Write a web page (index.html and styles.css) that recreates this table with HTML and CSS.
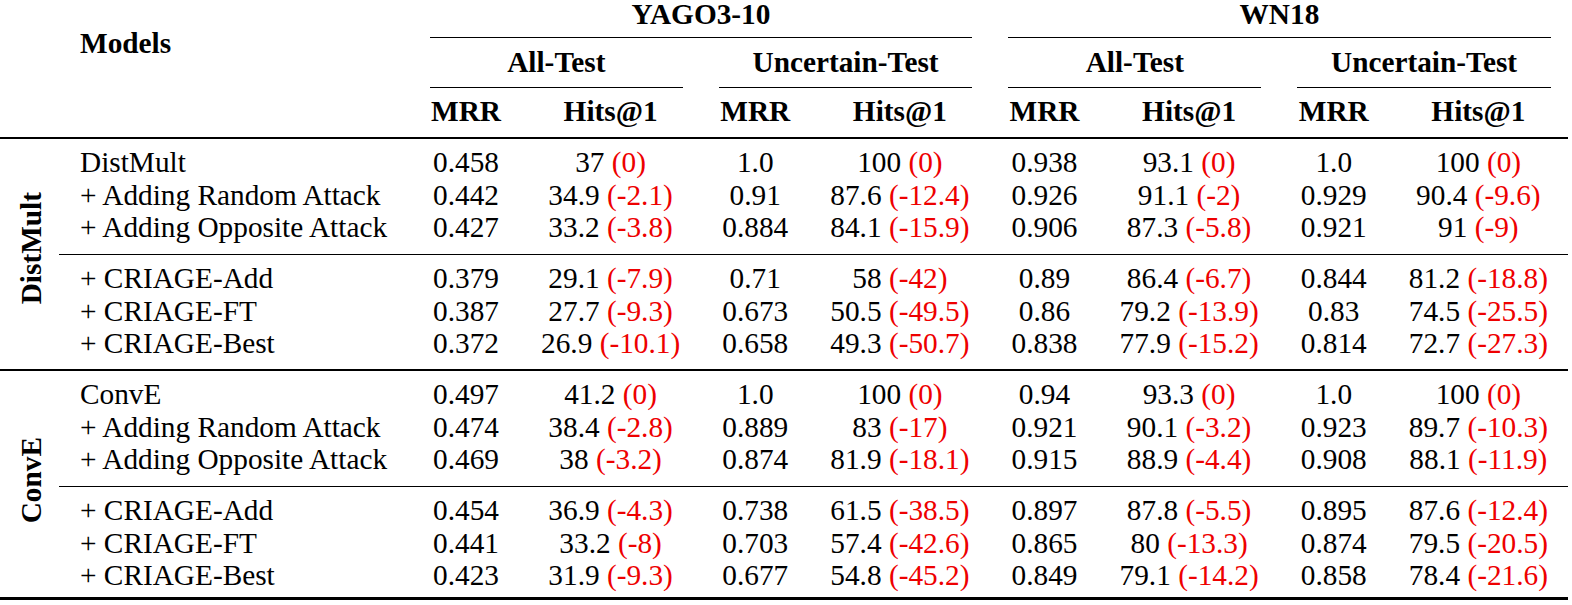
FILE: index.html
```html
<!DOCTYPE html>
<html lang="en">
<head>
<meta charset="utf-8">
<title>Results table</title>
<link rel="stylesheet" href="styles.css">
</head>
<body>
<div class="table">
  <div class="head">
    <div class="models">Models</div>
    <div class="ds cy">YAGO3-10</div>
    <div class="ds cw">WN18</div>
    <div class="crule r2 cy"></div>
    <div class="crule r2 cw"></div>
    <div class="sub c2">All-Test</div>
    <div class="sub c4">Uncertain-Test</div>
    <div class="sub c6">All-Test</div>
    <div class="sub c8">Uncertain-Test</div>
    <div class="crule r4 c2"></div>
    <div class="crule r4 c4"></div>
    <div class="crule r4 c6"></div>
    <div class="crule r4 c8"></div>
    <div class="met k2">MRR</div>
    <div class="met k3">Hits@1</div>
    <div class="met k4">MRR</div>
    <div class="met k5">Hits@1</div>
    <div class="met k6">MRR</div>
    <div class="met k7">Hits@1</div>
    <div class="met k8">MRR</div>
    <div class="met k9">Hits@1</div>
  </div>
  <div class="mid"></div>

  <section class="group">
    <div class="side"><span class="vlabel">DistMult</span></div>
    <div class="gbody">
      <div class="row"><span class="name">DistMult</span><span>0.458</span><span>37 <span class="d">(0)</span></span><span>1.0</span><span>100 <span class="d">(0)</span></span><span>0.938</span><span>93.1 <span class="d">(0)</span></span><span>1.0</span><span>100 <span class="d">(0)</span></span></div>
      <div class="row"><span class="name">+ Adding Random Attack</span><span>0.442</span><span>34.9 <span class="d">(-2.1)</span></span><span>0.91</span><span>87.6 <span class="d">(-12.4)</span></span><span>0.926</span><span>91.1 <span class="d">(-2)</span></span><span>0.929</span><span>90.4 <span class="d">(-9.6)</span></span></div>
      <div class="row"><span class="name">+ Adding Opposite Attack</span><span>0.427</span><span>33.2 <span class="d">(-3.8)</span></span><span>0.884</span><span>84.1 <span class="d">(-15.9)</span></span><span>0.906</span><span>87.3 <span class="d">(-5.8)</span></span><span>0.921</span><span>91 <span class="d">(-9)</span></span></div>
      <div class="inner"></div>
      <div class="row"><span class="name">+ CRIAGE-Add</span><span>0.379</span><span>29.1 <span class="d">(-7.9)</span></span><span>0.71</span><span>58 <span class="d">(-42)</span></span><span>0.89</span><span>86.4 <span class="d">(-6.7)</span></span><span>0.844</span><span>81.2 <span class="d">(-18.8)</span></span></div>
      <div class="row"><span class="name">+ CRIAGE-FT</span><span>0.387</span><span>27.7 <span class="d">(-9.3)</span></span><span>0.673</span><span>50.5 <span class="d">(-49.5)</span></span><span>0.86</span><span>79.2 <span class="d">(-13.9)</span></span><span>0.83</span><span>74.5 <span class="d">(-25.5)</span></span></div>
      <div class="row"><span class="name">+ CRIAGE-Best</span><span>0.372</span><span>26.9 <span class="d">(-10.1)</span></span><span>0.658</span><span>49.3 <span class="d">(-50.7)</span></span><span>0.838</span><span>77.9 <span class="d">(-15.2)</span></span><span>0.814</span><span>72.7 <span class="d">(-27.3)</span></span></div>
    </div>
  </section>
  <div class="mid"></div>

  <section class="group">
    <div class="side"><span class="vlabel">ConvE</span></div>
    <div class="gbody">
      <div class="row"><span class="name">ConvE</span><span>0.497</span><span>41.2 <span class="d">(0)</span></span><span>1.0</span><span>100 <span class="d">(0)</span></span><span>0.94</span><span>93.3 <span class="d">(0)</span></span><span>1.0</span><span>100 <span class="d">(0)</span></span></div>
      <div class="row"><span class="name">+ Adding Random Attack</span><span>0.474</span><span>38.4 <span class="d">(-2.8)</span></span><span>0.889</span><span>83 <span class="d">(-17)</span></span><span>0.921</span><span>90.1 <span class="d">(-3.2)</span></span><span>0.923</span><span>89.7 <span class="d">(-10.3)</span></span></div>
      <div class="row"><span class="name">+ Adding Opposite Attack</span><span>0.469</span><span>38 <span class="d">(-3.2)</span></span><span>0.874</span><span>81.9 <span class="d">(-18.1)</span></span><span>0.915</span><span>88.9 <span class="d">(-4.4)</span></span><span>0.908</span><span>88.1 <span class="d">(-11.9)</span></span></div>
      <div class="inner"></div>
      <div class="row"><span class="name">+ CRIAGE-Add</span><span>0.454</span><span>36.9 <span class="d">(-4.3)</span></span><span>0.738</span><span>61.5 <span class="d">(-38.5)</span></span><span>0.897</span><span>87.8 <span class="d">(-5.5)</span></span><span>0.895</span><span>87.6 <span class="d">(-12.4)</span></span></div>
      <div class="row"><span class="name">+ CRIAGE-FT</span><span>0.441</span><span>33.2 <span class="d">(-8)</span></span><span>0.703</span><span>57.4 <span class="d">(-42.6)</span></span><span>0.865</span><span>80 <span class="d">(-13.3)</span></span><span>0.874</span><span>79.5 <span class="d">(-20.5)</span></span></div>
      <div class="row"><span class="name">+ CRIAGE-Best</span><span>0.423</span><span>31.9 <span class="d">(-9.3)</span></span><span>0.677</span><span>54.8 <span class="d">(-45.2)</span></span><span>0.849</span><span>79.1 <span class="d">(-14.2)</span></span><span>0.858</span><span>78.4 <span class="d">(-21.6)</span></span></div>
    </div>
  </section>
  <div class="bottom"></div>
</div>
</body>
</html>
```

FILE: styles.css
```css
html, body {
  margin: 0;
  padding: 0;
  background: #fff;
}

.table {
  width: 1568px;
  font-family: "Liberation Serif", "Times New Roman", serif;
  font-size: 29.3px;
  color: #000;
}

/* ---------- header ---------- */
.head {
  display: grid;
  grid-template-columns: 393.68px repeat(8, 144.64px);
}

.models {
  grid-column: 1;
  grid-row: 1 / span 3;
  align-self: start;
  padding-left: 80px;
  margin-top: 27.4px;
  line-height: 32.3px;
  font-weight: bold;
}

.ds {
  grid-row: 1;
  padding-left: 36px;
  text-align: center;
  line-height: 29px;
  font-weight: bold;
}

.cy { grid-column: 2 / span 4; }
.cw { grid-column: 6 / span 4; }
.c2 { grid-column: 2 / span 2; }
.c4 { grid-column: 4 / span 2; }
.c6 { grid-column: 6 / span 2; }
.c8 { grid-column: 8 / span 2; }

.crule {
  height: 1px;
  background: #000;
  margin-left: 36px;
}

.r2 {
  grid-row: 2;
  margin-top: 8px;
  margin-bottom: 8px;
}

.sub {
  grid-row: 3;
  padding-left: 36px;
  text-align: center;
  line-height: 32.3px;
  font-weight: bold;
  white-space: nowrap;
}

.r4 {
  grid-row: 4;
  margin-top: 8.7px;
  margin-bottom: 7px;
}

.met {
  grid-row: 5;
  text-align: center;
  line-height: 32.3px;
  font-weight: bold;
}

.k2 { grid-column: 2; }
.k3 { grid-column: 3; }
.k4 { grid-column: 4; }
.k5 { grid-column: 5; }
.k6 { grid-column: 6; }
.k7 { grid-column: 7; }
.k8 { grid-column: 8; }
.k9 { grid-column: 9; }

/* ---------- rules ---------- */
.mid {
  height: 2px;
  background: #000;
  margin-top: 9.7px;
}

.bottom {
  height: 3px;
  background: #000;
  margin-top: 6px;
}

.inner {
  height: 1px;
  background: #000;
  margin: 10.8px 0 7.2px;
}

/* ---------- body groups ---------- */
.group {
  display: flex;
}

.side {
  width: 59px;
  flex: none;
  box-sizing: border-box;
  padding-left: 4px;
  padding-bottom: 2px;
  display: flex;
  align-items: center;
  justify-content: center;
}

.vlabel {
  writing-mode: vertical-rl;
  transform: rotate(180deg);
  font-weight: bold;
  line-height: 29px;
  white-space: nowrap;
}

.gbody {
  flex: 1;
  padding-top: 7.5px;
}

.row {
  display: grid;
  grid-template-columns: 334.68px repeat(8, 144.64px);
  line-height: 32.3px;
}

.row > span {
  text-align: center;
  white-space: nowrap;
}

.row > .name {
  text-align: left;
  padding-left: 21px;
}

.d {
  color: #e00;
}
```
